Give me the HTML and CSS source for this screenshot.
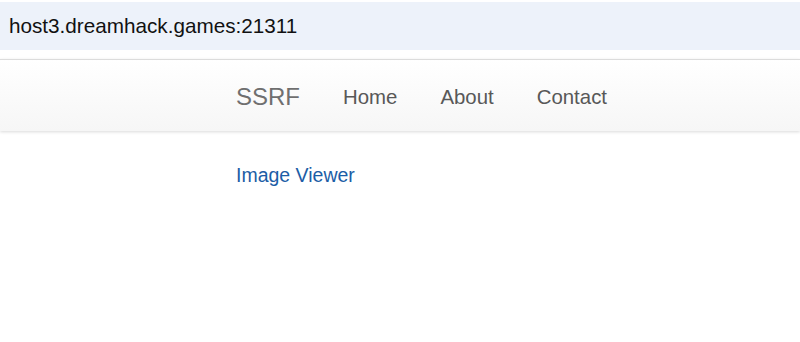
FILE: index.html
```html
<!DOCTYPE html>
<html lang="en">
<head>
  <meta charset="UTF-8">
  <meta name="viewport" content="width=device-width, initial-scale=1.0">
  <title>SSRF</title>
  <link rel="stylesheet" href="styles.css">
</head>
<body>
  <div class="addressbar">host3.dreamhack.games:21311</div>

  <nav class="navbar">
    <div class="container nav-inner">
      <a class="brand" href="#">SSRF</a>
      <ul class="nav-links">
        <li><a href="#">Home</a></li>
        <li><a href="#">About</a></li>
        <li><a href="#">Contact</a></li>
      </ul>
    </div>
  </nav>

  <div class="container content">
    <a class="viewer-link" href="#">Image Viewer</a>
  </div>
</body>
</html>
```

FILE: styles.css
```css
body {
  margin: 0;
  padding: 0;
  font-family: "Liberation Sans", Arial, sans-serif;
  background: #fff;
}

a {
  text-decoration: none;
}

.addressbar {
  margin-top: 2px;
  height: 48px;
  line-height: 48px;
  padding-left: 9px;
  background-color: #edf2fa;
  color: #111;
  font-size: 20.7px;
}

.navbar {
  margin-top: 9px;
  height: 71px;
  border-top: 1px solid #dcdcdc;
  background-image: linear-gradient(to bottom, #ffffff 0%, #f6f6f6 100%);
  box-shadow: 0 1px 3px rgba(0, 0, 0, 0.15);
}

.container {
  padding-left: 236px;
}

.nav-inner {
  display: flex;
  align-items: center;
  height: 71px;
  padding-top: 3px;
  box-sizing: border-box;
}

.brand {
  color: #6f6f6f;
  font-size: 24px;
  margin-right: 43px;
}

.nav-links {
  display: flex;
  gap: 43px;
  list-style: none;
  margin: 0;
  padding: 0;
}

.nav-links a {
  color: #585858;
  font-size: 20.4px;
}

.content {
  padding-top: 33px;
}

.viewer-link {
  color: #1c5da6;
  font-size: 19.5px;
}
```
